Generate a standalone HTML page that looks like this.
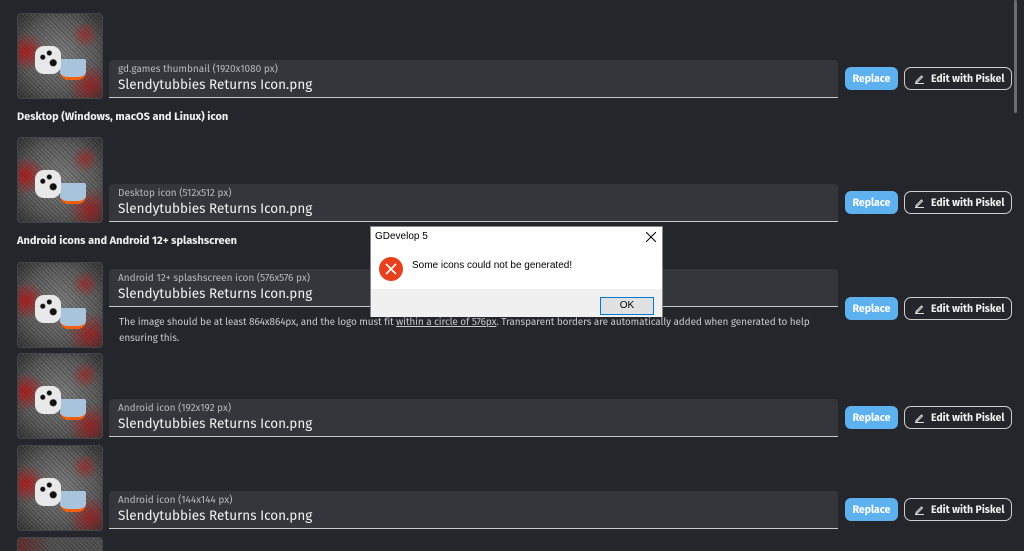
<!DOCTYPE html>
<html style="width:1024px;height:551px;overflow:hidden"><head><meta charset="utf-8"><style>
*{margin:0;padding:0;box-sizing:border-box}
body{width:1024px;height:551px;overflow:hidden;background:#25262b;font-family:"Fira Sans","Liberation Sans",sans-serif;color:#fff;position:relative}
.a{position:absolute}
.th{position:absolute;left:17px;width:86px;height:86px;border-radius:4px;border:1px solid #45464c;overflow:hidden;
background:
radial-gradient(circle at 10% 45%,rgba(190,10,10,.75) 0,rgba(190,10,10,0) 22%),
radial-gradient(circle at 85% 85%,rgba(190,10,10,.6) 0,rgba(190,10,10,0) 22%),
radial-gradient(circle at 80% 25%,rgba(190,10,10,.5) 0,rgba(190,10,10,0) 15%),
repeating-linear-gradient(45deg,rgba(0,0,0,.25) 0 1px,transparent 1px 3px),
repeating-linear-gradient(-45deg,rgba(255,255,255,.12) 0 1px,transparent 1px 2px),
radial-gradient(circle at 50% 50%,#7a7a7a 0,#555 60%,#2a2a2a 100%);}
.th:before{content:"";position:absolute;left:42px;top:45px;width:26px;height:18px;border-radius:2px 2px 8px 8px;background:#a8c4dc;border-bottom:3px solid #f06010}
.th:after{content:"";position:absolute;left:17px;top:32px;width:26px;height:28px;border-radius:9px;background:radial-gradient(circle at 30% 40%,#111 0 2px,transparent 3px),radial-gradient(circle at 70% 60%,#111 0 3px,transparent 4px),radial-gradient(circle at 55% 25%,#111 0 2px,transparent 3px),#e8e8e8}
.f{position:absolute;left:109px;width:729px;height:38px;background:#35363c;border-bottom:1px solid #c9c9cc;border-radius:4px 4px 0 0}
.f .l{position:absolute;left:9px;top:3px;font-size:10px;color:#b8b8bc}
.f .v{position:absolute;left:9px;top:16px;font-size:13.5px;color:#f2f2f2}
.r{position:absolute;left:845px;width:53px;height:23px;border-radius:6px;background:#5eb1ef;color:#fff;font-size:10.5px;font-weight:bold;text-align:center;line-height:23px}
.e{position:absolute;left:904px;width:108px;height:23px;border-radius:7px;border:1px solid #cfcfd2;color:#f0f0f0;font-size:10.5px;font-weight:bold;line-height:21px;padding-left:26px}
.e svg{position:absolute;left:9px;top:5px}
.h{position:absolute;left:17px;font-size:11px;font-weight:bold;color:#f0f0f0}
</style></head><body>
<div class="a" style="left:1014px;top:0;width:3px;height:113px;background:#6b6c70;border-radius:2px"></div>

<div class="th" style="top:13px"></div>
<div class="f" style="top:60px"><div class="l">gd.games thumbnail (1920x1080 px)</div><div class="v">Slendytubbies Returns Icon.png</div></div>
<div class="r" style="top:67px">Replace</div>
<div class="e" style="top:67px"><svg width="11" height="11" viewBox="0 0 11 11" fill="none" stroke="#ddd" stroke-width="1"><path d="M2 8.5L7.5 3l1 1L3 9.5H2z M1 10.5h9"/></svg>Edit with Piskel</div>

<div class="h" style="top:110px">Desktop (Windows, macOS and Linux) icon</div>
<div class="th" style="top:137px"></div>
<div class="f" style="top:184px"><div class="l">Desktop icon (512x512 px)</div><div class="v">Slendytubbies Returns Icon.png</div></div>
<div class="r" style="top:191px">Replace</div>
<div class="e" style="top:191px"><svg width="11" height="11" viewBox="0 0 11 11" fill="none" stroke="#ddd" stroke-width="1"><path d="M2 8.5L7.5 3l1 1L3 9.5H2z M1 10.5h9"/></svg>Edit with Piskel</div>

<div class="h" style="top:234px">Android icons and Android 12+ splashscreen</div>
<div class="th" style="top:262px"></div>
<div class="f" style="top:269px"><div class="l">Android 12+ splashscreen icon (576x576 px)</div><div class="v">Slendytubbies Returns Icon.png</div></div>
<div class="a" style="left:119px;top:314px;font-size:10px;color:#c8c8cc;line-height:16px;width:705px;letter-spacing:-0.1px">The image should be at least 864x864px, and the logo must fit <u>within a circle of 576px</u>. Transparent borders are automatically added when generated to help ensuring this.</div>
<div class="r" style="top:297px">Replace</div>
<div class="e" style="top:297px"><svg width="11" height="11" viewBox="0 0 11 11" fill="none" stroke="#ddd" stroke-width="1"><path d="M2 8.5L7.5 3l1 1L3 9.5H2z M1 10.5h9"/></svg>Edit with Piskel</div>

<div class="th" style="top:353px"></div>
<div class="f" style="top:399px"><div class="l">Android icon (192x192 px)</div><div class="v">Slendytubbies Returns Icon.png</div></div>
<div class="r" style="top:406px">Replace</div>
<div class="e" style="top:406px"><svg width="11" height="11" viewBox="0 0 11 11" fill="none" stroke="#ddd" stroke-width="1"><path d="M2 8.5L7.5 3l1 1L3 9.5H2z M1 10.5h9"/></svg>Edit with Piskel</div>

<div class="th" style="top:445px"></div>
<div class="f" style="top:491px"><div class="l">Android icon (144x144 px)</div><div class="v">Slendytubbies Returns Icon.png</div></div>
<div class="r" style="top:498px">Replace</div>
<div class="e" style="top:498px"><svg width="11" height="11" viewBox="0 0 11 11" fill="none" stroke="#ddd" stroke-width="1"><path d="M2 8.5L7.5 3l1 1L3 9.5H2z M1 10.5h9"/></svg>Edit with Piskel</div>

<div class="a" style="left:17px;top:537px;width:86px;height:14px;border:1px solid #45464c;border-bottom:0;border-radius:4px 4px 0 0;background:repeating-linear-gradient(45deg,rgba(0,0,0,.25) 0 1px,transparent 1px 3px),linear-gradient(90deg,#6a3030,#555 40%,#555)"></div>

<div class="a" style="left:370px;top:226px;width:293px;height:91px;background:#fff;border:1px solid #888;font-family:'Liberation Sans',sans-serif;color:#000">
 <div class="a" style="left:4px;top:4px;font-size:10px">GDevelop 5</div>
 <svg class="a" style="left:275px;top:5px" width="10" height="10" viewBox="0 0 10 10" stroke="#000" stroke-width="1"><path d="M0 0L10 10M10 0L0 10"/></svg>
 <div class="a" style="left:8px;top:30px;width:24px;height:24px;border-radius:50%;background:#e8401c"></div>
 <svg class="a" style="left:14px;top:36px" width="12" height="12" viewBox="0 0 12 12" stroke="#fff" stroke-width="1.6"><path d="M1 1L11 11M11 1L1 11"/></svg>
 <div class="a" style="left:41px;top:33px;font-size:10px">Some icons could not be generated!</div>
 <div class="a" style="left:0;top:62px;width:291px;height:28px;background:#f0f0f0"></div>
 <div class="a" style="left:229px;top:70px;width:54px;height:18px;background:#e1e1e1;border:1px solid #0078d7;font-size:10px;text-align:center;line-height:16px">OK</div>
</div>
</body></html>
